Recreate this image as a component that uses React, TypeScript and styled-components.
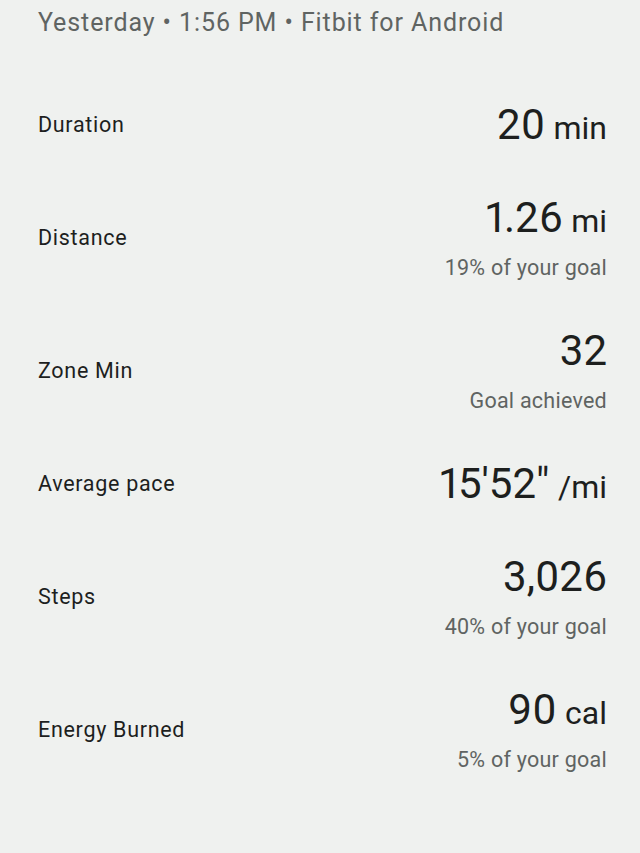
import React from "react";
import styled, { createGlobalStyle } from "styled-components";

const Global = createGlobalStyle`
  html, body { margin: 0; padding: 0; background: #eff1ef; }
  body { font-family: Roboto, "Noto Sans", "Liberation Sans", sans-serif; -webkit-font-smoothing: antialiased; }
`;

const Page = styled.div`
  width: 640px;
  min-height: 853px;
  background: #eff1ef;
  box-sizing: border-box;
  padding-top: 6.5px;
`;

const Header = styled.div`
  padding: 0 38px;
  font-size: 25px;
  line-height: 32px;
  letter-spacing: 0.9px;
  color: #5f6462;
  margin-bottom: 40px;
  white-space: nowrap;
`;

const List = styled.div`
  display: flex;
  flex-direction: column;
`;

const Row = styled.div`
  display: flex;
  justify-content: space-between;
  align-items: center;
  padding: 16.5px 33px 16.5px 38px;
`;

const Label = styled.div`
  font-size: 21.5px;
  letter-spacing: 0.7px;
  color: #1d1f1e;
  line-height: 30px;
`;

const ValueCol = styled.div`
  display: flex;
  flex-direction: column;
  align-items: flex-end;
`;

const Value = styled.div`
  font-size: 42px;
  line-height: 60px;
  height: 60px;
  color: #1d1f1e;
  white-space: nowrap;
  font-variant-numeric: proportional-nums;
`;

const Unit = styled.span`
  font-size: 32px;
  line-height: 1;
  margin-left: -2px;
`;

const Sub = styled.div`
  font-size: 21.5px;
  line-height: 40px;
  letter-spacing: 0.25px;
  color: #5f6462;
  white-space: nowrap;
`;

type Stat = { label: string; value: string; unit?: string; sub?: string };

const stats: Stat[] = [
  { label: "Duration", value: "20", unit: "min" },
  { label: "Distance", value: "1.26", unit: "mi", sub: "19% of your goal" },
  { label: "Zone Min", value: "32", sub: "Goal achieved" },
  { label: "Average pace", value: "15'52\"", unit: "/mi" },
  { label: "Steps", value: "3,026", sub: "40% of your goal" },
  { label: "Energy Burned", value: "90", unit: "cal", sub: "5% of your goal" },
];

export default function App() {
  return (
    <Page>
      <Global />
      <Header>Yesterday • 1:56 PM • Fitbit for Android</Header>
      <List>
        {stats.map((s) => (
          <Row key={s.label}>
            <Label>{s.label}</Label>
            <ValueCol>
              <Value>
                {s.value}
                {s.unit ? " " : ""}
                {s.unit && <Unit>{s.unit}</Unit>}
              </Value>
              {s.sub && <Sub>{s.sub}</Sub>}
            </ValueCol>
          </Row>
        ))}
      </List>
    </Page>
  );
}
